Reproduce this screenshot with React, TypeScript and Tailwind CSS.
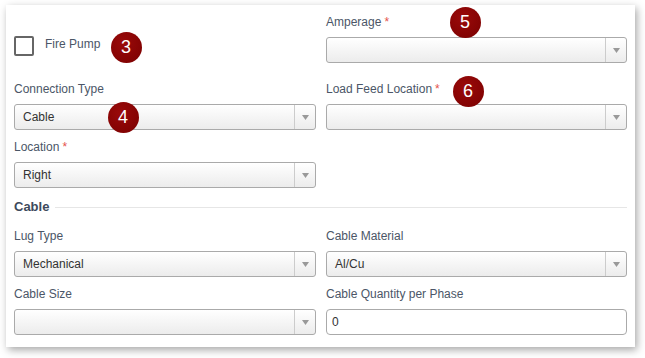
import React from 'react';

const font = { fontFamily: '"Liberation Sans", Arial, sans-serif' };

function Badge({ n, x, y }: { n: number; x: number; y: number }) {
  return (
    <div
      className="absolute w-[31px] h-[31px] rounded-full bg-[radial-gradient(circle_at_40%_35%,#9a0a0a,#7a0000)] text-white text-[18px] leading-[31px] text-center"
      style={{ left: x - 15.5, top: y - 15.5 }}
    >
      {n}
    </div>
  );
}

function Label({ text, required }: { text: string; required?: boolean }) {
  return (
    <div className="h-4 leading-4 text-[12px] text-[#4b5667] mb-[7px]">
      {text}
      {required && <span className="text-[#e5534b] ml-[3px]">*</span>}
    </div>
  );
}

function Select({ value }: { value?: string }) {
  return (
    <div className="flex h-[26px] border border-[#aaa] rounded-[3px] bg-gradient-to-b from-white to-[#ececec] overflow-hidden">
      <div className="flex-1 px-2 pt-px leading-[23px] text-[12px] text-[#333]">{value}</div>
      <div className="w-[21px] border-l border-[#ccc] flex items-center justify-center">
        <svg width="7" height="5" viewBox="0 0 7 5">
          <path d="M0 0 L7 0 L3.5 5 Z" fill="#999" />
        </svg>
      </div>
    </div>
  );
}

function Field({ label, required, value }: { label: string; required?: boolean; value?: string }) {
  return (
    <div>
      <Label text={label} required={required} />
      <Select value={value} />
    </div>
  );
}

export default function App() {
  return (
    <div className="w-[645px] h-[358px] bg-white pt-[5px] pl-[6px]" style={font}>
      <div className="relative w-[629px] h-[342px] bg-white shadow-[2px_3px_8px_rgba(0,0,0,0.35)] px-2 pt-[9px]">
        <div className="grid grid-cols-[302px_301px] gap-x-[10px]">
          <div className="flex items-start gap-[11px] pt-[22px]">
            <div className="w-5 h-5 border-2 border-[#666] rounded-[2px]" />
            <span className="text-[12px] leading-4 text-[#4b5667]">Fire Pump</span>
          </div>
          <Field label="Amperage" required />
        </div>

        <div className="grid grid-cols-[302px_301px] gap-x-[10px] mt-[18px]">
          <Field label="Connection Type" value="Cable" />
          <Field label="Load Feed Location" required />
        </div>

        <div className="grid grid-cols-[302px_301px] gap-x-[10px] mt-[9px]">
          <Field label="Location" required value="Right" />
          <div />
        </div>

        <div className="flex items-center gap-[6px] mt-[10px] h-[18px]">
          <span className="text-[13px] font-bold text-[#3d4a5c]">Cable</span>
          <div className="flex-1 h-px bg-[#e6e6e6]" />
        </div>

        <div className="grid grid-cols-[302px_301px] gap-x-[10px] mt-[12px]">
          <Field label="Lug Type" value="Mechanical" />
          <Field label="Cable Material" value="Al/Cu" />
        </div>

        <div className="grid grid-cols-[302px_301px] gap-x-[10px] mt-[9px]">
          <Field label="Cable Size" />
          <div>
            <Label text="Cable Quantity per Phase" />
            <div className="h-[26px] border border-[#aaa] rounded-[4px] bg-white px-[5px] pt-px leading-[23px] text-[12px] text-[#333]">
              0
            </div>
          </div>
        </div>

        <Badge n={3} x={120} y={42} />
        <Badge n={4} x={117} y={112} />
        <Badge n={5} x={459} y={17} />
        <Badge n={6} x={462} y={86} />
      </div>
    </div>
  );
}
